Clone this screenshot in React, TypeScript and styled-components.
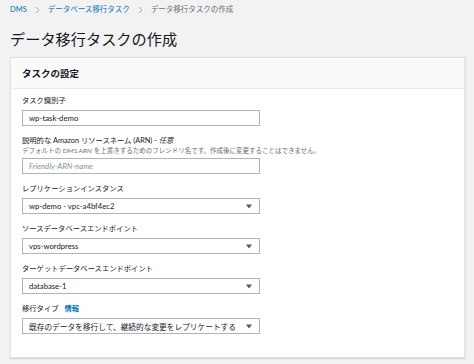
import React from "react";
import styled, { createGlobalStyle } from "styled-components";

const Global = createGlobalStyle`
  html, body { margin: 0; padding: 0; background: #f2f2f2; }
  body { font-family: Lato, "Noto Sans CJK JP", sans-serif; color: #16191f; }
  * { box-sizing: border-box; }
`;

const Page = styled.div`
  width: 474px;
  height: 364px;
  padding: 4px 9px 0 10px;
  overflow: hidden;
`;

const Crumbs = styled.nav`
  display: flex;
  align-items: center;
  gap: 6px;
  height: 12px;
  font-size: 7.5px;
  line-height: 12px;
`;

const CrumbLink = styled.span`
  color: #0073bb;
`;

const CrumbSep = styled.svg`
  width: 5px;
  height: 8px;
  margin: 0 2px;
`;

const CrumbCurrent = styled.span`
  color: #687078;
`;

const Title = styled.h1`
  margin: 0;
  padding: 12px 0 0;
  font-size: 15.2px;
  line-height: 22px;
  font-weight: 400;
  color: #16191f;
  height: 41px;
`;

const Card = styled.section`
  background: #fff;
  border: 1px solid #e3e3e3;
  box-shadow: 0 1px 1px rgba(0, 27, 43, 0.12), 1px 0 2px rgba(0, 27, 43, 0.06);
`;

const CardHeader = styled.header`
  height: 31px;
  background: #fafafa;
  border-bottom: 1px solid #eaeded;
  display: flex;
  align-items: center;
  padding: 0 11px;
  font-size: 9.5px;
  font-weight: 700;
  color: #16191f;
`;

const CardBody = styled.div`
  padding: 6px 11px 23px;
  display: flex;
  flex-direction: column;
  gap: 9px;
`;

const Field = styled.div`
  display: flex;
  flex-direction: column;
  width: 238px;
`;

const Label = styled.label<{ $tight?: boolean }>`
  font-size: 7.3px;
  line-height: 12px;
  color: #16191f;
  margin-bottom: ${(p) => (p.$tight ? 0 : 3)}px;
  white-space: nowrap;
  display: flex;
  align-items: center;
  gap: 6px;
`;

const Optional = styled.i`
  font-style: italic;
`;

const Info = styled.span`
  color: #0073bb;
  font-weight: 700;
`;

const Desc = styled.div`
  font-size: 6.5px;
  line-height: 8px;
  color: #687078;
  margin-bottom: 3px;
  white-space: nowrap;
`;

const Input = styled.div<{ $placeholder?: boolean }>`
  height: 16px;
  border: 1px solid #aab7b8;
  background: #fff;
  display: flex;
  align-items: center;
  padding: 0 7px 0 6px;
  font-size: 7.8px;
  color: ${(p) => (p.$placeholder ? "#879596" : "#16191f")};
  font-style: ${(p) => (p.$placeholder ? "italic" : "normal")};
  white-space: nowrap;
`;

const SelectBox = styled(Input)`
  justify-content: space-between;
  gap: 8px;
`;

const SelectText = styled.span`
  font-size: 7.7px;
`;

const Caret = styled.svg`
  width: 6px;
  height: 5px;
  flex: none;
`;

const Select: React.FC<{ value: string }> = ({ value }) => (
  <SelectBox>
    <SelectText>{value}</SelectText>
    <Caret viewBox="0 0 6 5">
      <path d="M0 0.5 H6 L3 4.5 Z" fill="#545b64" />
    </Caret>
  </SelectBox>
);

const Chevron = () => (
  <CrumbSep viewBox="0 0 5 8">
    <path d="M1 1 L4 4 L1 7" fill="none" stroke="#aab7b8" strokeWidth="1" />
  </CrumbSep>
);

export default function App() {
  return (
    <Page>
      <Global />
      <Crumbs>
        <CrumbLink>DMS</CrumbLink>
        <Chevron />
        <CrumbLink>データベース移行タスク</CrumbLink>
        <Chevron />
        <CrumbCurrent>データ移行タスクの作成</CrumbCurrent>
      </Crumbs>
      <Title>データ移行タスクの作成</Title>
      <Card>
        <CardHeader>タスクの設定</CardHeader>
        <CardBody>
          <Field>
            <Label>タスク識別子</Label>
            <Input>wp-task-demo</Input>
          </Field>
          <Field>
            <Label $tight>
              <span>
                説明的な Amazon リソースネーム (ARN) - <Optional>任意</Optional>
              </span>
            </Label>
            <Desc>
              デフォルトの DMS ARN を上書きするためのフレンドリ名です。作成後に変更することはできません。
            </Desc>
            <Input $placeholder>Friendly-ARN-name</Input>
          </Field>
          <Field>
            <Label>レプリケーションインスタンス</Label>
            <Select value="wp-demo - vpc-a4bf4ec2" />
          </Field>
          <Field>
            <Label>ソースデータベースエンドポイント</Label>
            <Select value="vps-wordpress" />
          </Field>
          <Field>
            <Label>ターゲットデータベースエンドポイント</Label>
            <Select value="database-1" />
          </Field>
          <Field>
            <Label>
              移行タイプ <Info>情報</Info>
            </Label>
            <Select value="既存のデータを移行して、継続的な変更をレプリケートする" />
          </Field>
        </CardBody>
      </Card>
    </Page>
  );
}
